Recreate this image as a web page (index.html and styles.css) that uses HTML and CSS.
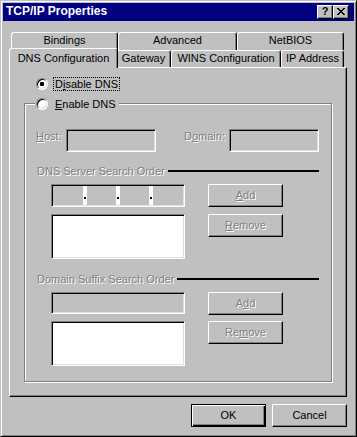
FILE: index.html
```html
<!DOCTYPE html>
<html>
<head>
<meta charset="utf-8">
<title>TCP/IP Properties</title>
<link rel="stylesheet" href="styles.css">
</head>
<body>
<div class="window">
  <div class="caption">
    <span class="caption-title">TCP/IP Properties</span>
    <span class="cap-btn help">?</span>
    <span class="cap-btn close"><svg width="8" height="7" viewBox="0 0 8 7" shape-rendering="crispEdges"><path fill="#000" d="M0 0h2v1H0zM6 0h2v1H6zM1 1h2v1H1zM5 1h2v1H5zM2 2h4v1H2zM3 3h2v1H3zM2 4h4v1H2zM1 5h2v1H1zM5 5h2v1H5zM0 6h2v1H0zM6 6h2v1H6z"/></svg></span>
  </div>
  <div class="client">
    <div class="tabstrip">
      <div class="tabrow back">
        <div class="tab w-bindings">Bindings</div>
        <div class="tab w-advanced">Advanced</div>
        <div class="tab w-netbios">NetBIOS</div>
      </div>
      <div class="tabrow front">
        <div class="tab selected w-dns">DNS Configuration</div>
        <div class="tab w-gateway">Gateway</div>
        <div class="tab w-wins">WINS Configuration</div>
        <div class="tab w-ip">IP Address</div>
      </div>
    </div>
    <div class="panel">
      <div class="radio-row">
        <span class="radio checked"></span>
        <span class="radio-label focus">D<u>i</u>sable DNS</span>
      </div>
      <div class="groupbox">
        <div class="legend">
          <span class="radio"></span>
          <span class="radio-label"><u>E</u>nable DNS</span>
        </div>
        <div class="field-row">
          <span class="lbl lbl-host disabled"><u>H</u>ost:</span>
          <span class="edit field"></span>
          <span class="lbl lbl-domain disabled">D<u>o</u>main:</span>
          <span class="edit field"></span>
        </div>
        <div class="section-head">
          <span class="disabled">DNS Server Search Order</span>
          <span class="rule"></span>
        </div>
        <div class="list-grid">
          <div class="edit ip">
            <span class="octet"></span><span class="sep"><i class="dot"></i></span>
            <span class="octet mid"></span><span class="sep"><i class="dot"></i></span>
            <span class="octet mid"></span><span class="sep"><i class="dot"></i></span>
            <span class="octet last"></span>
          </div>
          <div class="btn disabled"><u>A</u>dd</div>
          <div class="edit listbox"></div>
          <div class="btn disabled"><u>R</u>emove</div>
        </div>
        <div class="section-head second">
          <span class="disabled">Domain Suffix Search Order</span>
          <span class="rule"></span>
        </div>
        <div class="list-grid short">
          <div class="edit"></div>
          <div class="btn disabled">A<u>d</u>d</div>
          <div class="edit listbox"></div>
          <div class="btn disabled">Re<u>m</u>ove</div>
        </div>
      </div>
    </div>
    <div class="dialog-btns">
      <div class="btn default">OK</div>
      <div class="btn">Cancel</div>
    </div>
  </div>
</div>
</body>
</html>
```
FILE: styles.css
```css
* { box-sizing: border-box; }
html, body { margin: 0; padding: 0; }
body {
  width: 357px;
  height: 437px;
  overflow: hidden;
  background: #c0c0c0;
  font-family: "Liberation Sans", Arial, sans-serif;
  font-size: 11px;
  color: #000;
}
u { text-decoration: underline; text-underline-offset: 1px; }

.window {
  width: 357px;
  height: 437px;
  background: #c0c0c0;
  border: 1px solid;
  border-color: #c0c0c0 #000 #000 #c0c0c0;
  box-shadow: inset 1px 1px #fff, inset -1px -1px #808080;
  padding: 2px;
  display: flex;
  flex-direction: column;
}

/* caption */
.caption {
  flex: none;
  height: 18px;
  background: #000080;
  display: flex;
  align-items: flex-start;
  padding-left: 3px;
}
.caption-title {
  flex: 1;
  color: #fff;
  font-weight: bold;
  font-size: 12px;
  line-height: 16px;
  white-space: nowrap;
}
.cap-btn {
  width: 16px;
  height: 14px;
  margin-top: 2px;
  background: #c0c0c0;
  border: 1px solid;
  border-color: #fff #000 #000 #fff;
  box-shadow: inset -1px -1px #808080;
  display: flex;
  align-items: center;
  justify-content: center;
}
.help {
  font-weight: bold;
  font-size: 11px;
  line-height: 11px;
  padding-bottom: 1px;
}
.close { margin-right: 5px; padding-bottom: 1px; }
.close svg { display: block; }

/* client */
.client {
  flex: 1;
  padding: 11px 7px 0 6px;
  display: flex;
  flex-direction: column;
}

/* tabs */
.tabstrip { padding-left: 2px; }
.tabrow { display: flex; align-items: flex-end; }
.tabrow.back { height: 18px; }
.tabrow.front { height: 17px; }
.tab {
  flex: none;
  height: 100%;
  background: #c0c0c0;
  border-top: 1px solid #fff;
  border-left: 1px solid #fff;
  border-right: 1px solid #000;
  border-radius: 3px 3px 0 0;
  box-shadow: inset -1px 0 #808080;
  text-align: center;
  line-height: 15px;
  white-space: nowrap;
}
.w-bindings { width: 107px; }
.w-advanced { width: 119px; }
.w-netbios { width: 107px; }
.w-dns { width: 105px; }
.w-gateway { width: 55px; }
.w-wins { width: 110px; }
.w-ip { width: 63px; }
.tab.selected {
  position: relative;
  z-index: 1;
  width: 109px;
  height: 20px;
  margin: 0 -2px -1px -2px;
  padding-top: 1px;
  line-height: 16px;
}

/* panel */
.panel {
  width: 338px;
  border: 1px solid;
  border-color: #fff #000 #000 #fff;
  box-shadow: inset -1px -1px #808080;
  padding: 9px 0 14px 0;
}

.radio-row {
  display: flex;
  align-items: center;
  height: 14px;
  margin-left: 26px;
}
.radio {
  flex: none;
  width: 12px;
  height: 12px;
  border-radius: 50%;
  background: #fff;
  border: 1px solid;
  border-color: #808080 #fff #fff #808080;
  box-shadow: inset 1px 1px #000, inset -1px -1px #dfdfdf;
  display: flex;
  align-items: center;
  justify-content: center;
}
.radio.checked::after {
  content: "";
  width: 4px;
  height: 4px;
  border-radius: 1px;
  background: #000;
}
.radio-label {
  margin-left: 5px;
  padding: 0 1px;
  border: 1px solid transparent;
  line-height: 12px;
  white-space: nowrap;
}
.radio-label.focus { border: 1px dotted #000; }

.groupbox {
  width: 308px;
  margin: 12px 0 0 14px;
  border: 1px solid #808080;
  box-shadow: inset 1px 1px #fff, 1px 1px #fff;
  padding-bottom: 15px;
}
.legend {
  display: flex;
  align-items: center;
  width: fit-content;
  height: 14px;
  margin: -7px 0 0 10px;
  padding: 0 1px;
  background: #c0c0c0;
}

.disabled {
  color: #808080;
  text-shadow: 1px 1px 0 #fff;
}

.field-row {
  display: flex;
  align-items: flex-start;
  margin: 18px 0 0 11px;
}
.lbl { flex: none; line-height: 15px; white-space: nowrap; }
.lbl-host { width: 30px; }
.lbl-domain { width: 45px; margin-left: 28px; }

.edit {
  display: block;
  background: #c0c0c0;
  border: 1px solid;
  border-color: #808080 #fff #fff #808080;
  box-shadow: inset 1px 1px #000, inset -1px -1px #dfdfdf;
  padding: 1px;
}
.edit.field { width: 90px; height: 23px; flex: none; }
.edit.listbox { background: #fff; }

.section-head {
  display: flex;
  align-items: center;
  height: 15px;
  margin: 11px 12px 0 12px;
  white-space: nowrap;
}
.section-head.second { margin-top: 12px; }
.rule {
  flex: 1;
  height: 2px;
  margin-left: 3px;
  background: #000;
}

.list-grid {
  display: grid;
  grid-template-columns: 134px 75px;
  grid-template-rows: 23px 45px;
  column-gap: 23px;
  row-gap: 7px;
  margin: 6px 0 0 26px;
}
.list-grid.short { grid-template-rows: 22px 45px; }

.edit.ip {
  display: flex;
  background: #fff;
}
.octet { width: 30px; background: #c0c0c0; }
.octet.mid { width: 29px; }
.octet.last { flex: 1; }
.sep {
  width: 4px;
  display: flex;
  justify-content: center;
  align-items: flex-end;
  padding-bottom: 6px;
}
.dot { display: block; width: 2px; height: 2px; background: #000; }

/* buttons */
.btn {
  width: 75px;
  height: 23px;
  background: #c0c0c0;
  border: 1px solid;
  border-color: #fff #000 #000 #fff;
  box-shadow: inset -1px -1px #808080;
  display: flex;
  align-items: center;
  justify-content: center;
  line-height: 13px;
  white-space: nowrap;
}
.btn.default {
  border: 1px solid #000;
  box-shadow: inset 1px 1px #fff, inset -1px -1px #000, inset -2px -2px #808080;
}

.dialog-btns {
  display: flex;
  justify-content: flex-end;
  gap: 6px;
  margin-top: 7px;
}
```
